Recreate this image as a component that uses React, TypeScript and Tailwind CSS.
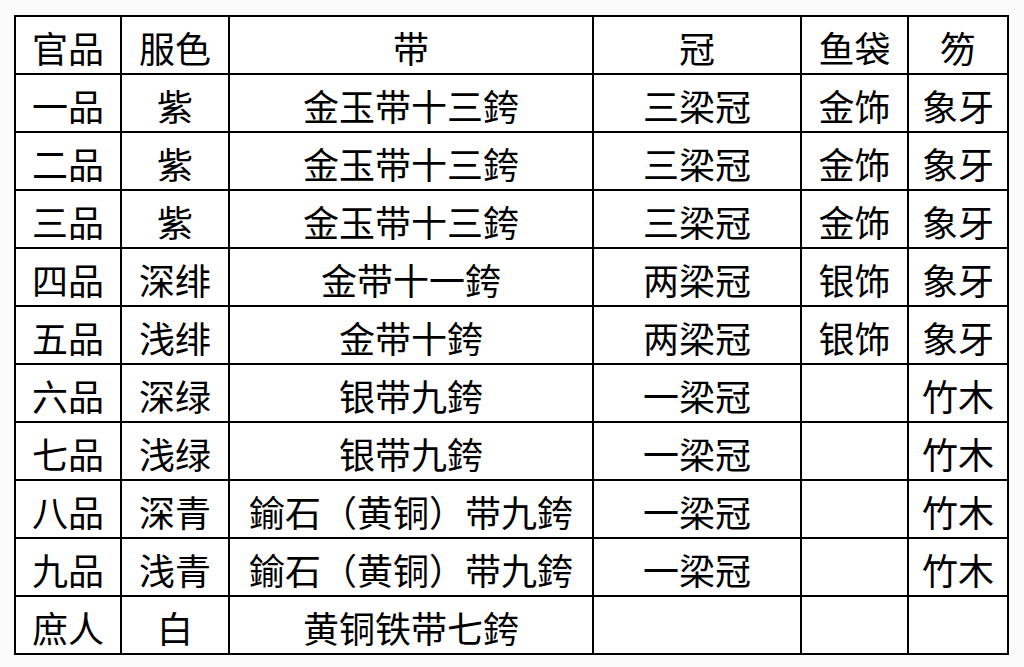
import React from 'react';

const rows: string[][] = [
  ['一品', '紫', '金玉带十三銙', '三梁冠', '金饰', '象牙'],
  ['二品', '紫', '金玉带十三銙', '三梁冠', '金饰', '象牙'],
  ['三品', '紫', '金玉带十三銙', '三梁冠', '金饰', '象牙'],
  ['四品', '深绯', '金带十一銙', '两梁冠', '银饰', '象牙'],
  ['五品', '浅绯', '金带十銙', '两梁冠', '银饰', '象牙'],
  ['六品', '深绿', '银带九銙', '一梁冠', '', '竹木'],
  ['七品', '浅绿', '银带九銙', '一梁冠', '', '竹木'],
  ['八品', '深青', '鍮石（黄铜）带九銙', '一梁冠', '', '竹木'],
  ['九品', '浅青', '鍮石（黄铜）带九銙', '一梁冠', '', '竹木'],
  ['庶人', '白', '黄铜铁带七銙', '', '', ''],
];

const head = ['官品', '服色', '带', '冠', '鱼袋', '笏'];
const widths = ['w-[106px]', 'w-[108px]', 'w-[364px]', 'w-[208px]', 'w-[107px]', 'w-[100px]'];

const App: React.FC = () => {
  return (
    <div className="w-[1024px] h-[667px] bg-[#fbfbfb] pt-[15px] pl-[14px] font-['Noto_Sans_CJK_SC',sans-serif] text-black">
      <table className="border-collapse border-2 border-black bg-white table-fixed w-[993px]">
        <colgroup>
          {widths.map((w, i) => (
            <col key={i} className={w} />
          ))}
        </colgroup>
        <thead>
          <tr className="h-[58px]">
            {head.map((h, i) => (
              <th key={i} className="border-2 border-black p-0 pt-[3px] text-[36px] font-normal leading-none text-center align-middle">
                {h}
              </th>
            ))}
          </tr>
        </thead>
        <tbody>
          {rows.map((r, ri) => (
            <tr key={ri} className="h-[58px]">
              {r.map((c, ci) => (
                <td key={ci} className="border-2 border-black p-0 pt-[3px] text-[36px] leading-none text-center align-middle whitespace-nowrap">
                  {c}
                </td>
              ))}
            </tr>
          ))}
        </tbody>
      </table>
    </div>
  );
};

export default App;
